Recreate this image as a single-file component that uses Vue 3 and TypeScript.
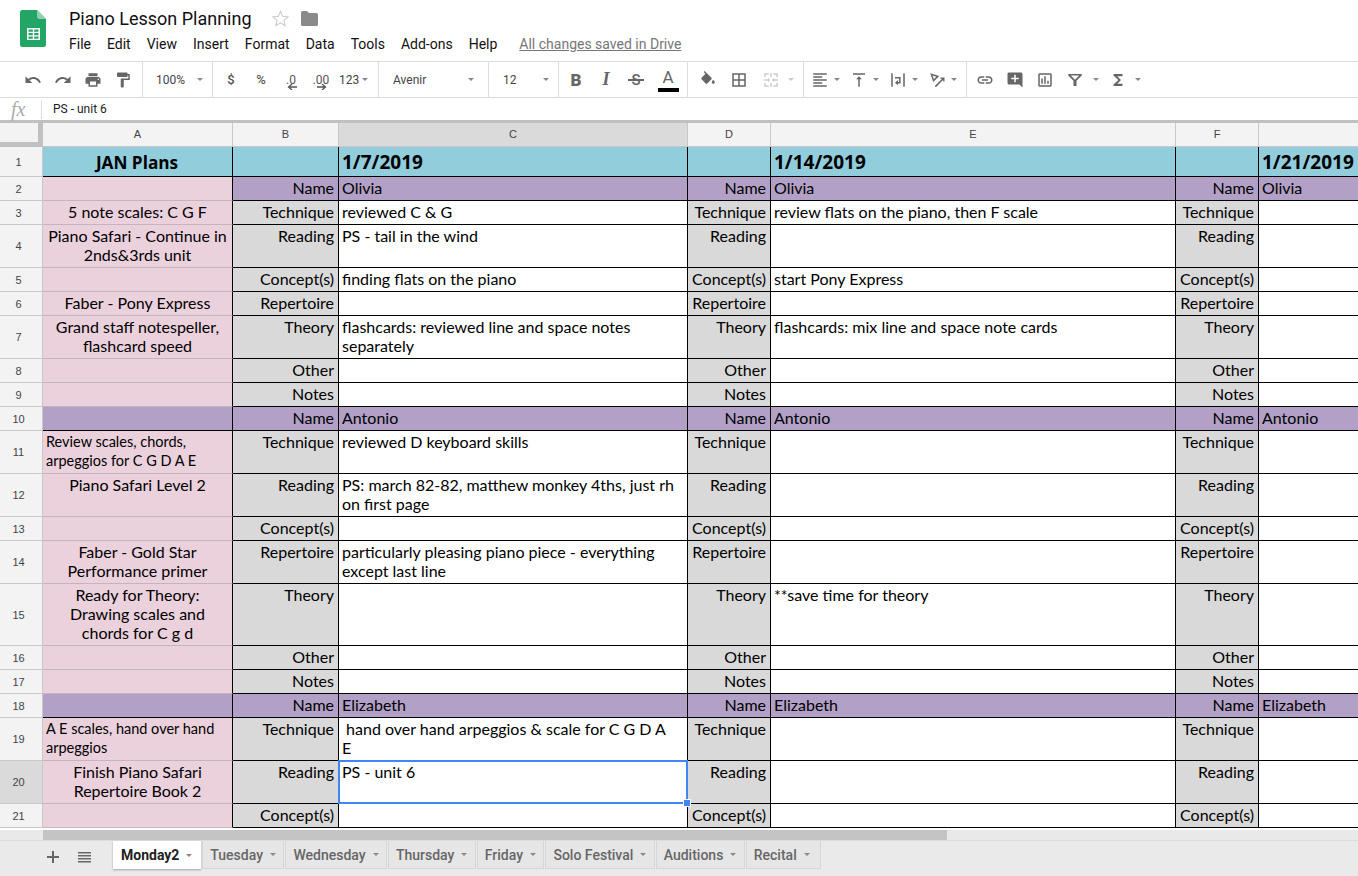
<script setup lang="ts">
import { computed } from 'vue'

const P: Record<string, string> = {
  undo: 'M12.5 8c-2.65 0-5.05.99-6.9 2.6L2 7v9h9l-3.62-3.62c1.39-1.16 3.16-1.88 5.12-1.88 3.54 0 6.55 2.31 7.6 5.5l2.37-.78C21.08 11.03 17.15 8 12.5 8z',
  redo: 'M18.4 10.6C16.55 8.99 14.15 8 11.5 8c-4.65 0-8.58 3.03-9.96 7.22L3.9 16c1.05-3.19 4.05-5.5 7.6-5.5 1.95 0 3.73.72 5.12 1.88L13 16h9V7l-3.6 3.6z',
  print: 'M19 8H5c-1.66 0-3 1.34-3 3v6h4v4h12v-4h4v-6c0-1.66-1.34-3-3-3zm-3 11H8v-5h8v5zm3-7c-.55 0-1-.45-1-1s.45-1 1-1 1 .45 1 1-.45 1-1 1zm-1-9H6v4h12V3z',
  paint: 'M18 4V3c0-.55-.45-1-1-1H5c-.55 0-1 .45-1 1v4c0 .55.45 1 1 1h12c.55 0 1-.45 1-1V6h1v4H9v11c0 .55.45 1 1 1h2c.55 0 1-.45 1-1v-9h8V4h-3z',
  fill: 'M16.56 8.94L7.62 0 6.21 1.41l2.38 2.38-5.15 5.15c-.59.59-.59 1.54 0 2.12l5.5 5.5c.29.29.68.44 1.06.44s.77-.15 1.06-.44l5.5-5.5c.59-.58.59-1.53 0-2.12zM19 11.5s-2 2.17-2 3.5c0 1.1.9 2 2 2s2-.9 2-2c0-1.33-2-3.5-2-3.5z',
  borders: 'M3 3v18h18V3H3zm8 16H5v-6h6v6zm0-8H5V5h6v6zm8 8h-6v-6h6v6zm0-8h-6V5h6v6z',
  merge: 'M3 3h6v2H5v3H3zM15 3h6v5h-2V5h-4zM3 16h2v3h4v2H3zM19 16h2v5h-6v-2h4zM11 3h2v5h-2zM11 16h2v5h-2zM3 11h5V9l3 3-3 3v-2H3zM21 11h-5V9l-3 3 3 3v-2h5z',
  align: 'M15 15H3v2h12v-2zm0-8H3v2h12V7zM3 13h18v-2H3v2zm0 8h18v-2H3v2zM3 3v2h18V3H3z',
  valign: 'M8 11h3v10h2V11h3l-4-4-4 4zM4 3v2h16V3H4z',
  wrap: 'M3 3h2v18H3zM19 3h2v18h-2zM8 8h7.500v8.500H12v2.500l-4-3.500 4-3.500v2.500h1.500V10H8z',
  rotate: 'M3 3l12 3.500-8 8zM6 6l1.800 5 3.300-3.300zM9 20l9.500-9.500-2-.5V8.500H22V14h-1.500l-.5-2-9.500 9.500z',
  link: 'M3.9 12c0-1.71 1.39-3.1 3.1-3.1h4V7H7c-2.76 0-5 2.24-5 5s2.24 5 5 5h4v-1.900H7c-1.71 0-3.1-1.39-3.1-3.1zM8 13h8v-2H8v2zm9-6h-4v1.900h4c1.71 0 3.1 1.39 3.1 3.1s-1.39 3.1-3.1 3.1h-4V17h4c2.76 0 5-2.24 5-5s-2.24-5-5-5z',
  comment: 'M22 4c0-1.1-.9-2-2-2H4c-1.1 0-2 .9-2 2v12c0 1.1.9 2 2 2h14l4 4V4zm-5 7h-4v4h-2v-4H7V9h4V5h2v4h4v2z',
  chart: 'M19 3H5c-1.1 0-2 .9-2 2v14c0 1.1.9 2 2 2h14c1.1 0 2-.9 2-2V5c0-1.1-.9-2-2-2zm0 16H5V5h14v14zM7 10h2v7H7zm4-3h2v10h-2zm4 6h2v4h-2z',
  filter: 'M3 4h18v2l-7 7v7h-4v-7L3 6zM6.500 6l5.500 5.500L17.500 6z',
  sigma: 'M18 4H6v2l6.500 6L6 18v2h12v-3h-7l5-5-5-5h7z',
}

type Item = { k: string; d?: string; t?: string; cls?: string; sub?: string }
const arrow: Item = { k: 'arrow' }
const groups: { cls: string; items: Item[] }[] = [
  { cls: 'g1', items: [{ k: 'icon', d: P.undo }, { k: 'icon', d: P.redo }, { k: 'icon', d: P.print }, { k: 'icon', d: P.paint }] },
  { cls: 'g2', items: [{ k: 'label', t: '100%', cls: 'zoom' }, arrow] },
  { cls: 'g3', items: [{ k: 'text', t: '$' }, { k: 'text', t: '%' }, { k: 'dec', t: '.0', sub: 'M10 3H2M5 0 1.500 3 5 6' }, { k: 'dec', t: '.00', sub: 'M0 3h8M5 0l3.500 3L5 6' }, { k: 'label', t: '123', cls: 'num' }, arrow] },
  { cls: 'g4', items: [{ k: 'label', t: 'Avenir', cls: 'font' }, arrow] },
  { cls: 'g5', items: [{ k: 'label', t: '12', cls: 'size' }, arrow] },
  { cls: 'g6', items: [{ k: 'text', t: 'B', cls: 'b' }, { k: 'text', t: 'I', cls: 'i' }, { k: 'text', t: 'S', cls: 's' }, { k: 'color', t: 'A' }] },
  { cls: 'g7', items: [{ k: 'icon', d: P.fill }, { k: 'icon', d: P.borders }, { k: 'icon', d: P.merge, cls: 'off' }, { k: 'arrow', cls: 'off' }] },
  { cls: 'g8', items: [{ k: 'icon', d: P.align, cls: 'nar' }, arrow, { k: 'icon', d: P.valign, cls: 'nar' }, arrow, { k: 'icon', d: P.wrap, cls: 'nar' }, arrow, { k: 'icon', d: P.rotate, cls: 'nar' }, arrow] },
  { cls: 'g9', items: [{ k: 'icon', d: P.link }, { k: 'icon', d: P.comment }, { k: 'icon', d: P.chart }, { k: 'icon', d: P.filter }, arrow, { k: 'icon', d: P.sigma }, arrow] },
]

const menus = ['File', 'Edit', 'View', 'Insert', 'Format', 'Data', 'Tools', 'Add-ons', 'Help']
const tabs = ['Monday2', 'Tuesday', 'Wednesday', 'Thursday', 'Friday', 'Solo Festival', 'Auditions', 'Recital']
const colHeads = ['A', 'B', 'C', 'D', 'E', 'F', '']

type Row = { h: number; label: string; a?: string; small?: boolean; c?: string; e?: string; g?: string }
const rows: Row[] = [
  { h: 24, label: 'Name', c: 'Olivia', e: 'Olivia', g: 'Olivia' },
  { h: 24, label: 'Technique', a: '5 note scales: C G F', c: 'reviewed C & G', e: 'review flats on the piano, then F scale' },
  { h: 43, label: 'Reading', a: 'Piano Safari - Continue in 2nds&3rds unit', c: 'PS - tail in the wind' },
  { h: 24, label: 'Concept(s)', c: 'finding flats on the piano', e: 'start Pony Express' },
  { h: 24, label: 'Repertoire', a: 'Faber - Pony Express' },
  { h: 43, label: 'Theory', a: 'Grand staff notespeller, flashcard speed', c: 'flashcards: reviewed line and space notes separately', e: 'flashcards: mix line and space note cards' },
  { h: 24, label: 'Other' },
  { h: 24, label: 'Notes' },
  { h: 24, label: 'Name', c: 'Antonio', e: 'Antonio', g: 'Antonio' },
  { h: 43, label: 'Technique', a: 'Review scales, chords, arpeggios for C G D A E', small: true, c: 'reviewed D keyboard skills' },
  { h: 43, label: 'Reading', a: 'Piano Safari Level 2', c: 'PS: march 82-82, matthew monkey 4ths, just rh on first page' },
  { h: 24, label: 'Concept(s)' },
  { h: 43, label: 'Repertoire', a: 'Faber - Gold Star Performance primer', c: 'particularly pleasing piano piece - everything except last line' },
  { h: 62, label: 'Theory', a: 'Ready for Theory: Drawing scales and chords for C g d', e: '**save time for theory' },
  { h: 24, label: 'Other' },
  { h: 24, label: 'Notes' },
  { h: 24, label: 'Name', c: 'Elizabeth', e: 'Elizabeth', g: 'Elizabeth' },
  { h: 43, label: 'Technique', a: 'A E scales, hand over hand arpeggios', small: true, c: '\u00a0hand over hand arpeggios & scale for C G D A E' },
  { h: 43, label: 'Reading', a: 'Finish Piano Safari Repertoire Book 2', c: 'PS - unit 6' },
  { h: 24, label: 'Concept(s)' },
]

const gridRows = computed(() => '24px 30px ' + rows.map((r) => r.h + 'px').join(' '))
const isName = (r: Row) => r.label === 'Name'
const purpleA = (r: Row, i: number) => isName(r) && i > 0
</script>

<template>
  <div class="app">
    <header class="titlebar">
      <svg class="logo" viewBox="0 0 26 37" width="26" height="37">
        <path d="M2.500 0H17l9 9v25.500a2.500 2.500 0 0 1-2.500 2.500h-21A2.500 2.500 0 0 1 0 34.500v-32A2.500 2.500 0 0 1 2.500 0z" fill="#23a566" />
        <path d="M17 0l9 9h-6.500A2.500 2.500 0 0 1 17 6.500z" fill="#8ed1b1" />
        <path d="M7 18h13v12H7zM8.500 19.500v2.300h4.300v-2.300zM14.200 19.500v2.300h4.300v-2.300zM8.500 23v2.300h4.300V23zM14.200 23v2.300h4.300V23zM8.500 26.500v2.200h4.300v-2.200zM14.200 26.500v2.200h4.300v-2.200z" fill="#fff" fill-rule="evenodd" />
      </svg>
      <div class="titleinfo">
        <div class="docline">
          <span class="doctitle">Piano Lesson Planning</span>
          <svg class="star" viewBox="0 0 24 24" width="19" height="19"><path d="M12 3l2.700 6.300 6.800.6-5.200 4.500 1.600 6.600L12 17.400 6.100 21l1.600-6.600L2.500 9.900l6.800-.6z" fill="none" stroke="#c8c8c8" stroke-width="1.300" /></svg>
          <svg class="folder" viewBox="0 0 17 15" width="17" height="15"><path d="M0 1.500A1.500 1.500 0 0 1 1.500 0H6l2 2h7.500A1.500 1.500 0 0 1 17 3.500v10a1.500 1.500 0 0 1-1.500 1.500h-14A1.500 1.500 0 0 1 0 13.500z" fill="#8a8a8a" /></svg>
        </div>
        <nav class="menus">
          <span v-for="m in menus" :key="m" class="menu">{{ m }}</span>
          <span class="saved">All changes saved in Drive</span>
        </nav>
      </div>
    </header>

    <div class="toolbar">
      <div v-for="g in groups" :key="g.cls" class="group" :class="g.cls">
        <template v-for="(it, n) in g.items" :key="n">
          <span v-if="it.k === 'icon'" class="btn" :class="it.cls"><svg viewBox="0 0 24 24" class="ico"><path :d="it.d" fill-rule="evenodd" /></svg></span>
          <span v-else-if="it.k === 'arrow'" class="arrow" :class="it.cls"></span>
          <span v-else-if="it.k === 'label'" class="label" :class="it.cls">{{ it.t }}</span>
          <span v-else-if="it.k === 'text'" class="btn txt" :class="it.cls">{{ it.t }}</span>
          <span v-else-if="it.k === 'dec'" class="btn dec">{{ it.t }}<svg viewBox="0 0 10 6" width="10" height="6" class="decarrow"><path :d="it.sub" fill="none" stroke="#555" stroke-width="1.300" /></svg></span>
          <span v-else class="btn color">{{ it.t }}<i class="colorbar"></i></span>
        </template>
      </div>
    </div>

    <div class="formula">
      <span class="fx">fx</span>
      <span class="fval">PS - unit 6</span>
    </div>

    <main class="sheet" :style="{ gridTemplateRows: gridRows }">
      <div class="corner"></div>
      <div v-for="(c, i) in colHeads" :key="i" class="colhead" :class="{ sel: c === 'C' }">{{ c }}</div>

      <div class="rowhead">1</div>
      <div class="cell blue acenter jan">JAN Plans</div>
      <div class="cell blue"></div>
      <div class="cell blue date">1/7/2019</div>
      <div class="cell blue"></div>
      <div class="cell blue date">1/14/2019</div>
      <div class="cell blue"></div>
      <div class="cell blue date">1/21/2019</div>

      <template v-for="(r, i) in rows" :key="i">
        <div class="rowhead" :class="{ sel: i === 18 }">{{ i + 2 }}</div>
        <div class="cell a" :class="{ purple: purpleA(r, i), small: r.small }">{{ r.a }}</div>
        <div class="cell lab" :class="{ purple: isName(r) }">{{ r.label }}</div>
        <div class="cell val" :class="{ purple: isName(r) }">{{ r.c }}<i v-if="i === 18" class="selection"><i class="handle"></i></i></div>
        <div class="cell lab" :class="{ purple: isName(r) }">{{ r.label }}</div>
        <div class="cell val" :class="{ purple: isName(r) }">{{ r.e }}</div>
        <div class="cell lab" :class="{ purple: isName(r) }">{{ r.label }}</div>
        <div class="cell val" :class="{ purple: isName(r) }">{{ r.g }}</div>
      </template>
    </main>

    <div class="hscroll"><div class="thumb"></div></div>

    <footer class="tabbar">
      <svg class="plus" viewBox="0 0 12 12" width="12" height="12"><path d="M5 0h2v5h5v2H7v5H5V7H0V5h5z" fill="#666" /></svg>
      <svg class="list" viewBox="0 0 13 11" width="13" height="11"><path d="M0 0h13v1.500H0zM0 3h13v1.500H0zM0 6h13v1.500H0zM0 9h13v1.500H0z" fill="#666" /></svg>
      <div v-for="(t, i) in tabs" :key="t" class="tab" :class="{ active: i === 0 }">
        {{ t }}<span class="arrow tabarrow"></span>
      </div>
    </footer>
  </div>
</template>

<style>
html, body { margin: 0; padding: 0; overflow: hidden; background: #fff; }
</style>

<style scoped>
.app { width: 1358px; height: 876px; display: flex; flex-direction: column; overflow: hidden; font-family: Roboto, Arial, sans-serif; color: #000; background: #fff; }

.titlebar { height: 62px; flex: none; display: flex; box-sizing: border-box; border-bottom: 1px solid #dcdcdc; padding: 10px 0 0 20px; }
.logo { flex: none; }
.titleinfo { margin-left: 23px; margin-top: -4px; }
.docline { display: flex; align-items: center; height: 25px; }
.doctitle { font-size: 18px; color: #111; width: 182px; white-space: nowrap; }
.star { margin-left: 20px; }
.folder { margin-left: 11px; }
.menus { display: flex; align-items: center; margin-top: 3px; font-size: 14px; height: 20px; }
.menu { margin-right: 16px; color: #111; }
.saved { margin-left: 6px; color: #777; text-decoration: underline; }

.toolbar { height: 36px; flex: none; box-sizing: border-box; border-bottom: 1px solid #dcdcdc; display: flex; padding-left: 18px; }
.group { display: flex; align-items: center; box-sizing: border-box; border-right: 1px solid #dcdcdc; flex: none; }
.g1 { width: 125px; }
.g2 { width: 70px; }
.g3 { width: 166px; padding-left: 3px; }
.g4 { width: 110px; }
.g5 { width: 70px; }
.g6 { width: 129px; padding-left: 2px; }
.g7 { width: 116px; padding-left: 4px; }
.g7 .btn { width: 31.500px; }
.g7 .arrow { margin-left: 1px; }
.g8 { width: 163px; padding-left: 2px; }
.g8 .arrow { margin-right: 5px; }
.g9 { border-right: 0; padding-left: 3px; }
.g9 .arrow { margin: 0 4px 0 2.500px; }
.btn { width: 30px; height: 30px; flex: none; display: flex; align-items: center; justify-content: center; position: relative; color: #555; }
.btn.nar { width: 28px; }
.ico { width: 18px; height: 18px; fill: #666; }
.off .ico { fill: #ccc; }
.arrow { width: 0; height: 0; border-left: 3.500px solid transparent; border-right: 3.500px solid transparent; border-top: 3.500px solid #888; flex: none; }
.arrow.off { border-top-color: #ccc; }
.label { font-size: 12px; color: #444; flex: none; }
.zoom { margin-left: 13px; width: 40.500px; }
.num { margin-left: 3px; width: 22.500px; }
.font { margin-left: 14px; width: 74.500px; }
.size { margin-left: 14px; width: 39.500px; }
.txt { font-size: 13px; font-weight: 500; }
.b { font-size: 17px; font-weight: 900; color: #666; }
.i { font-family: "Liberation Serif", serif; font-size: 18px; font-style: italic; font-weight: 700; color: #666; }
.s { font-size: 15px; font-weight: 500; color: #666; }
.s::after { content: ""; position: absolute; left: 7px; top: 14px; width: 16px; height: 2px; background: #666; }
.dec { font-size: 12px; }
.decarrow { position: absolute; left: 11px; top: 19px; }
.color { font-size: 17px; font-weight: 400; padding-bottom: 6px; box-sizing: border-box; color: #666; margin-left: 2px; }
.colorbar { position: absolute; left: 5px; top: 23px; width: 21px; height: 4px; background: #000; }

.formula { height: 25px; flex: none; box-sizing: border-box; border-bottom: 3px solid #c0c0c0; display: flex; align-items: center; font-size: 12px; }
.fx { width: 42px; flex: none; height: 19px; line-height: 19px; box-sizing: border-box; border-right: 1px solid #dcdcdc; padding-left: 11px; font-family: "Liberation Serif", serif; font-style: italic; font-size: 20px; color: #aaa; }
.fval { margin-left: 11px; color: #222; }

.sheet { flex: none; height: 707px; display: grid; grid-template-columns: 43px 190px 106px 349px 83px 405px 83px 100px; overflow: hidden; font-family: Lato, sans-serif; }
.corner { background: #f3f3f3; box-sizing: border-box; border-right: 5px solid #c0c0c0; border-bottom: 5px solid #c0c0c0; }
.colhead { background: #f3f3f3; border-right: 1px solid #c8c8c8; border-bottom: 1px solid #c8c8c8; box-sizing: border-box; font: 11px/23px Arial, "Liberation Sans", sans-serif; text-align: center; color: #444; }
.colhead.sel { background: #dadada; }
.rowhead { background: #f3f3f3; border-right: 1px solid #c8c8c8; border-bottom: 1px solid #c8c8c8; box-sizing: border-box; font: 11px Arial, "Liberation Sans", sans-serif; color: #444; display: flex; align-items: center; justify-content: center; padding-right: 5px; }
.rowhead.sel { background: #dadada; }

.cell { box-sizing: border-box; border-right: 1px solid #000; border-bottom: 1px solid #000; padding: 1px 4px 0 3px; font-size: 16px; line-height: 19px; color: #000; overflow: hidden; white-space: normal; }
.blue { background: #92cddc; }
.date { font-family: "Open Sans", sans-serif; font-weight: 700; font-size: 19px; line-height: 27px; padding-top: 2px; white-space: nowrap; }
.jan { font-family: "Open Sans", sans-serif; font-weight: 700; font-size: 17.200px; line-height: 27px; padding-top: 2px; white-space: nowrap; }
.acenter { text-align: center; }
.a { background: #ead1dc; text-align: center; border-bottom-color: #c4b4bc; padding-left: 4px; padding-right: 4px; }
.a.small { text-align: left; font-size: 14.500px; padding-left: 3px; padding-right: 10px; }
.a.purple { border-bottom-color: #000; }
.lab { background: #d9d9d9; text-align: right; }
.val { background: #fff; position: relative; overflow: visible; padding-right: 11px; }
.purple { background: #b2a0c6; }
.selection { position: absolute; left: -1px; top: -1px; right: -1px; bottom: -1px; border: 2px solid #4285f4; z-index: 2; pointer-events: none; }
.handle { position: absolute; right: -5px; bottom: -5px; width: 6px; height: 6px; background: #4285f4; border: 1px solid #fff; }

.hscroll { height: 10px; flex: none; background: #e9e9e9; box-sizing: border-box; padding-left: 43px; }
.thumb { width: 904px; height: 100%; background: #c4c4c4; }

.tabbar { flex: 1; display: flex; align-items: flex-start; background: #eaeaea; padding-left: 113px; position: relative; border-top: 1px solid #dcdcdc; }
.plus { position: absolute; left: 47px; top: 10px; }
.list { position: absolute; left: 78px; top: 11px; }
.tab { height: 28px; display: flex; align-items: center; box-sizing: border-box; padding: 0 7.400px 0 7px; background: #e6e6e6; border: 1px solid #d6d6d6; border-top: 0; margin-right: 1px; font-size: 14px; font-weight: 500; color: #666; white-space: nowrap; }
.tab:last-child { padding-right: 10px; }
.tab.active { background: #fff; color: #222; font-weight: 700; box-shadow: 0 1px 2px rgba(0,0,0,.3); border: 0; padding-left: 8px; padding-right: 9px; }
.tabarrow { margin: 0 0 0 7px; }
</style>
